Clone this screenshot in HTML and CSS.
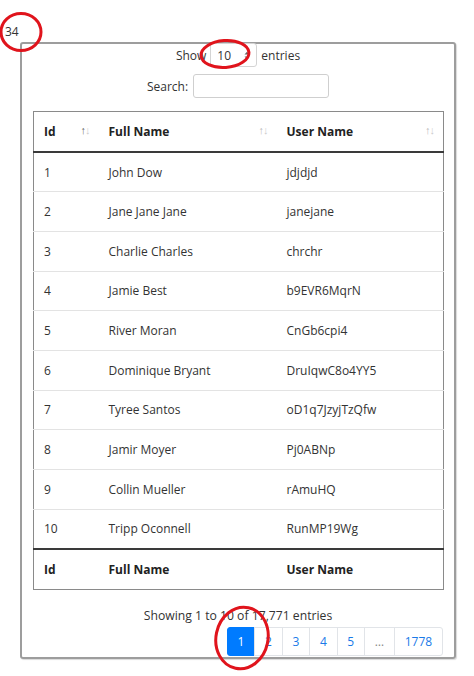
FILE: index.html
```html
<!DOCTYPE html>
<html>
<head>
<meta charset="utf-8">
<link rel="stylesheet" href="styles.css">
</head>
<body>
<div class="num">34</div>
<div class="card">
  <div class="length">
    <span>Show</span>
    <div class="select"><span>10</span>
      <svg class="caret" width="6" height="9" viewBox="0 0 6 9"><path d="M0.5 3.5 L3 0.8 L5.5 3.5 Z M0.5 5.5 L3 8.2 L5.5 5.5 Z" fill="#666"/></svg>
    </div>
    <span>entries</span>
  </div>
  <div class="search">
    <label>Search:</label>
    <div class="input"></div>
  </div>
  <table class="grid">
    <colgroup><col class="c1"><col class="c2"><col class="c3"></colgroup>
    <thead>
      <tr>
        <th><span class="h">Id</span><span class="sort"><i class="up">↑</i><i class="dn">↓</i></span></th>
        <th><span class="h">Full Name</span><span class="sort"><i class="up lt">↑</i><i class="dn">↓</i></span></th>
        <th><span class="h">User Name</span><span class="sort"><i class="up lt">↑</i><i class="dn">↓</i></span></th>
      </tr>
    </thead>
    <tbody>
      <tr><td>1</td><td>John Dow</td><td>jdjdjd</td></tr>
      <tr><td>2</td><td>Jane Jane Jane</td><td>janejane</td></tr>
      <tr><td>3</td><td>Charlie Charles</td><td>chrchr</td></tr>
      <tr><td>4</td><td>Jamie Best</td><td>b9EVR6MqrN</td></tr>
      <tr><td>5</td><td>River Moran</td><td>CnGb6cpi4</td></tr>
      <tr><td>6</td><td>Dominique Bryant</td><td>DruIqwC8o4YY5</td></tr>
      <tr><td>7</td><td>Tyree Santos</td><td>oD1q7JzyjTzQfw</td></tr>
      <tr><td>8</td><td>Jamir Moyer</td><td>Pj0ABNp</td></tr>
      <tr><td>9</td><td>Collin Mueller</td><td>rAmuHQ</td></tr>
      <tr><td>10</td><td>Tripp Oconnell</td><td>RunMP19Wg</td></tr>
    </tbody>
    <tfoot>
      <tr><th>Id</th><th>Full Name</th><th>User Name</th></tr>
    </tfoot>
  </table>
  <div class="info">Showing 1 to 10 of 17,771 entries</div>
  <ul class="pager">
    <li class="active">1</li>
    <li>2</li>
    <li>3</li>
    <li>4</li>
    <li>5</li>
    <li class="dots">…</li>
    <li>1778</li>
  </ul>
</div>
<svg class="mark m1" width="46" height="44" viewBox="0 0 46 44"><ellipse cx="22" cy="21" rx="20" ry="18.5" fill="none" stroke="#e0141c" stroke-width="3"/></svg>
<svg class="mark m2" width="56" height="34" viewBox="0 0 56 34"><ellipse cx="27" cy="16" rx="24" ry="13.5" fill="none" stroke="#e0141c" stroke-width="3" transform="rotate(-4 27 16)"/></svg>
<svg class="mark m3" width="62" height="70" viewBox="0 0 62 70"><ellipse cx="31" cy="34" rx="26" ry="31" fill="none" stroke="#e0141c" stroke-width="3" transform="rotate(12 31 34)"/></svg>
</body>
</html>
```
FILE: styles.css
```css
html, body {
  margin: 0;
  padding: 0;
  background: #fff;
}
body {
  font-family: "Open Sans", "Noto Sans", sans-serif;
  font-size: 12px;
  color: #333;
  position: relative;
  width: 474px;
  height: 676px;
  overflow: hidden;
}
.num {
  padding: 25px 0 0 5px;
  height: 17px;
  line-height: 14px;
  font-size: 12px;
  color: #333;
}
.card {
  margin-left: 20px;
  width: 436px;
  height: 617px;
  box-sizing: border-box;
  border: 2px solid #9d9d9d;
  border-radius: 3px;
  box-shadow: 1px 1px 1px rgba(0,0,0,0.15);
  padding: 0 11px;
  display: flex;
  flex-direction: column;
}
.length {
  display: flex;
  justify-content: center;
  align-items: center;
  gap: 4px;
  height: 24px;
  margin-top: -1px;
}
.select {
  width: 47px;
  height: 24px;
  box-sizing: border-box;
  border: 1px solid #d4d4d4;
  border-radius: 3px;
  display: flex;
  align-items: center;
  justify-content: space-between;
  padding: 0 6px 0 6px;
  font-size: 12px;
}
.caret { display: block; }
.search {
  display: flex;
  justify-content: center;
  align-items: center;
  gap: 5px;
  margin-top: 7px;
  height: 24px;
}
.input {
  width: 136px;
  height: 24px;
  box-sizing: border-box;
  border: 1px solid #cfcfcf;
  border-radius: 3px;
}
.grid {
  margin-top: 13px;
  width: 410px;
  border-collapse: collapse;
  table-layout: fixed;
  border: 1px solid #8a8a8a;
}
.c1 { width: 65px; }
.c2 { width: 178px; }
.c3 { width: 167px; }
.grid th, .grid td {
  text-align: left;
  padding: 0 10px;
  white-space: nowrap;
}
.grid thead th {
  height: 39px;
  border-bottom: 2px solid #3a3a3a;
  font-weight: 700;
  color: #222;
}
.grid th .h { vertical-align: middle; }
.sort {
  float: right;
  font-style: normal;
  font-size: 11px;
  line-height: 14px;
  margin-right: -2px;
  margin-top: 1px;
}
.sort i { font-style: normal; }
.sort .up { color: #666; }
.sort .up.lt { color: #bbb; }
.sort .dn { color: #ccc; margin-left: -1px; }
.grid tbody td {
  height: 39.7px;
  box-sizing: border-box;
  border-top: 1px solid #e3e3e3;
  padding-top: 0;
  padding-bottom: 0;
}
.grid tbody tr:first-child td { border-top: none; }
.grid tfoot th {
  height: 39px;
  border-top: 2px solid #3a3a3a;
  font-weight: 700;
  color: #222;
}
.info {
  text-align: center;
  margin-top: 18px;
  line-height: 16px;
  font-size: 12.2px;
}
.pager {
  list-style: none;
  margin: 3px 0 0 0;
  padding: 0;
  display: flex;
  justify-content: flex-end;
  height: 29px;
}
.pager li {
  padding: 0 9.8px;
  line-height: 27px;
  border: 1px solid #e1e4e8;
  margin-left: -1px;
  color: #1a7ae8;
}
.pager li:first-child { border-radius: 3px 0 0 3px; }
.pager li:last-child { border-radius: 0 3px 3px 0; }
.pager li.active {
  background: #007bff;
  border-color: #007bff;
  color: #fff;
}
.pager li.dots { color: #888; }
.mark { position: absolute; }
.m1 { left: -1px; top: 11px; }
.m2 { left: 198px; top: 38px; }
.m3 { left: 211px; top: 604px; }
```
